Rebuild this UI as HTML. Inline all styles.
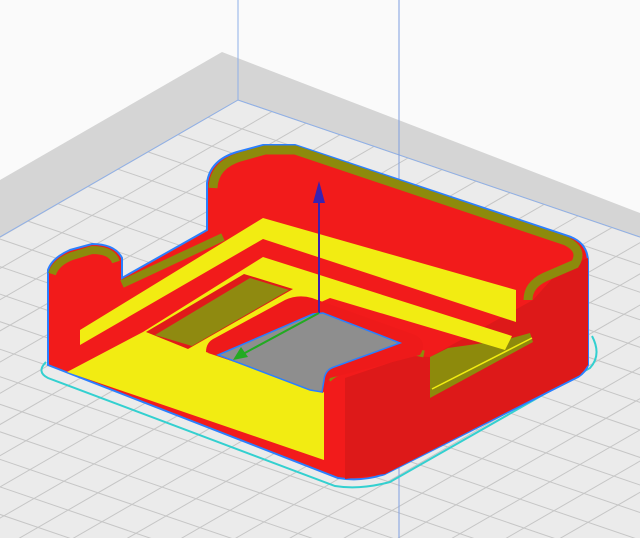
<!DOCTYPE html>
<html><head><meta charset="utf-8"><style>html,body{margin:0;padding:0;background:#fafafa;width:640px;height:538px;overflow:hidden}</style></head>
<body>
<svg width="640" height="538" viewBox="0 0 640 538" xmlns="http://www.w3.org/2000/svg" style="display:block">
<rect width="640" height="538" fill="#fafafa"/>
<polygon points="222,52 640,213 640,240 238,100 0,237 0,180" fill="#d5d5d5"/>
<polygon points="238,100 640,237 640,538 0,538 0,237" fill="#ebebeb"/>
<g transform="matrix(34,11.6,-30,17.3,238,100)" stroke="#c6c6c6" stroke-width="1" fill="none">
<path vector-effect="non-scaling-stroke" d="M0,0H30M0,1H30M0,2H30M0,3H30M0,4H30M0,5H30M0,6H30M0,7H30M0,8H30M0,9H30M0,10H30M0,11H30M0,12H30M0,13H30M0,14H30M0,15H30M0,16H30M0,17H30M0,18H30M0,19H30M0,20H30"/>
<path vector-effect="non-scaling-stroke" d="M0,0V30M1,0V30M2,0V30M3,0V30M4,0V30M5,0V30M6,0V30M7,0V30M8,0V30M9,0V30M10,0V30M11,0V30M12,0V30M13,0V30M14,0V30M15,0V30M16,0V30M17,0V30M18,0V30M19,0V30M20,0V30"/>
</g>
<polyline points="0,237 238,100 640,237" fill="none" stroke="#8fb0e8" stroke-width="1"/>
<line x1="238" y1="0" x2="238" y2="100" stroke="#8fb0e8" stroke-width="1"/>
<line x1="399" y1="0" x2="399" y2="538" stroke="#7f9fe0" stroke-width="1"/>

<!-- skirt -->
<path d="M46,362 Q36,372 48,378 L335,486 Q360,490 390,482 L590,368 Q602,355 592,336" fill="none" stroke="#33d0d0" stroke-width="2"/>

<!-- red silhouette -->
<path d="M48,270 Q52,258 70,250 L92,244 Q115,244 122,258 L122,278 L207,230 L207,183 Q210,160 237,152 L263,145 L295,145 L571,237 Q588,244 588,262 L588,365 Q586,372 578,377 L385,474 Q362,482 338,478 L48,365 Z" fill="#f21b1b" stroke="#2a7fff" stroke-width="2"/>

<!-- darker right face -->
<polygon points="345,378 410,356 430,357 533,300 560,270 588,258 588,365 580,375 385,474 345,479" fill="#dd1919"/>

<!-- rims -->
<path d="M213,188 Q214,165 240,157 L265,150 L295,150 L566,241 Q584,250 575,264 L545,277 Q528,285 528,300" fill="none" stroke="#8d8a0c" stroke-width="9"/>
<path d="M52,274 Q56,262 72,256 L92,250 Q112,250 116,262" fill="none" stroke="#8d8a0c" stroke-width="8"/>
<path d="M122,284 L223,237" fill="none" stroke="#8d8a0c" stroke-width="8"/>
<path d="M328,379 Q335,372 345,370 L410,351 L424,354" fill="none" stroke="#8d8a0c" stroke-width="7"/>
<polygon points="430,357 448,348 505,340 530,333 533,342 430,398" fill="#8d8a0c"/>
<line x1="432" y1="389" x2="532" y2="338" stroke="#f2ec12" stroke-width="1.5"/>

<!-- yellow band1 (L) -->
<polygon points="80,330 263,218 516,290 516,322 263,239 80,345" fill="#f2ec12"/>
<!-- band2 + front floor -->
<polygon points="67,372 143,332 263,257 512,336 505,350 330,298 208,353 324,392 324,460" fill="#f2ec12"/>

<!-- olive window with red frame -->
<polygon points="146,332 244,274 293,289 188,349" fill="#e01a1a"/>
<polygon points="155,335 250,278 289,290 192,346" fill="#8f8a10"/>

<!-- ring + gray hole -->
<path d="M206,352 Q206,342 215,338 L285,300 Q298,294 312,298 L415,335 Q428,342 420,355 L330,378 L323,393 Z" fill="#ee1a1a"/>
<path d="M218,355 L313,314 L323,313 L400,343 L334,367 Q325,370 324,380 L322,392 L310,390 Z" fill="#8e8e8e" stroke="#2a7fff" stroke-width="1.5"/>

<!-- axes -->
<line x1="319" y1="313" x2="319" y2="200" stroke="#3a22b0" stroke-width="2"/>
<polygon points="313,203 325,203 319,181" fill="#3a22b0"/>
<line x1="319" y1="313" x2="243" y2="354" stroke="#22aa22" stroke-width="2"/>
<polygon points="233,360 248,357 241,347" fill="#22aa22"/>
</svg>
</body></html>
